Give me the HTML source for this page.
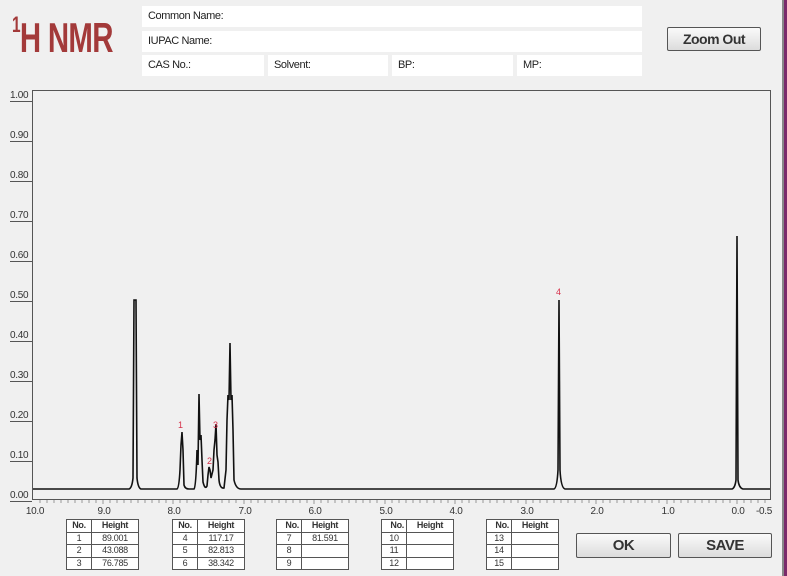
<!DOCTYPE html>
<html><head><meta charset="utf-8"><style>
*{margin:0;padding:0;box-sizing:border-box}
body{width:787px;height:576px;background:#f0f0f0;position:relative;overflow:hidden;font-family:"Liberation Sans",sans-serif}
.f{position:absolute;background:#fff;font-size:11px;color:#222;padding-left:6px;line-height:21px;height:21px;letter-spacing:-0.4px}
.btn{position:absolute;border:1px solid #555;border-radius:2px;background:linear-gradient(#fafafa,#dcdcdc);font-weight:bold;color:#333;text-align:center;font-size:15px;letter-spacing:-0.5px}
.tb{position:absolute;border-collapse:collapse;background:#fff;font-size:9px;color:#333;letter-spacing:-0.3px}
.tb td{border:1px solid #555;height:12.5px;line-height:11px;padding:0 2px}
.tb td:first-child{width:25px;text-align:center}
.tb td:last-child{width:47px;text-align:center}
.yl{position:absolute;left:10px;font-size:10px;color:#333;border-bottom:1px solid #555;width:22px;letter-spacing:-0.3px}
.xl{position:absolute;top:506px;font-size:10px;color:#333;transform:translateX(-50%);letter-spacing:-0.3px}
</style></head><body>
<div style="position:absolute;left:12px;top:14px;color:#a33a3a;font-weight:bold;font-size:42px;letter-spacing:-1px;transform:scaleX(0.7);transform-origin:0 0;white-space:nowrap"><sup style="font-size:22px;position:relative;top:-5px">1</sup>H NMR</div>
<div class="f" style="left:142px;top:6px;width:500px">Common Name:</div>
<div class="f" style="left:142px;top:31px;width:500px">IUPAC Name:</div>
<div class="f" style="left:142px;top:55px;width:122px">CAS No.:</div>
<div class="f" style="left:268px;top:55px;width:120px">Solvent:</div>
<div class="f" style="left:392px;top:55px;width:121px">BP:</div>
<div class="f" style="left:517px;top:55px;width:125px">MP:</div>
<div class="btn" style="left:667px;top:27px;width:94px;height:24px;line-height:22px;font-size:14px">Zoom Out</div>
<div style="position:absolute;left:782px;top:0;width:2px;height:576px;background:#888"></div>
<div style="position:absolute;left:784px;top:0;width:3px;height:576px;background:#7a2a6a"></div>

<svg style="position:absolute;left:0;top:0" width="787" height="576">
<rect x="32.5" y="90.5" width="738" height="409" fill="none" stroke="#555" stroke-width="1"/>
<g stroke="#999">
<path d="M40 500v3M47 500v3M54 500v3M61 500v3M68 500v3M75 500v3M82 500v3M89 500v3M96 500v3M103 500v4M110 500v3M117 500v3M124 500v3M131 500v3M138 500v3M145 500v3M152 500v3M159 500v3M166 500v3M173 500v4M180 500v3M187 500v3M194 500v3M201 500v3M208 500v3M215 500v3M222 500v3M229 500v3M236 500v3M244 500v4M251 500v3M258 500v3M265 500v3M272 500v3M279 500v3M286 500v3M293 500v3M300 500v3M307 500v3M314 500v4M321 500v3M328 500v3M335 500v3M342 500v3M349 500v3M356 500v3M363 500v3M370 500v3M377 500v3M385 500v4M392 500v3M399 500v3M406 500v3M413 500v3M420 500v3M427 500v3M434 500v3M441 500v3M448 500v3M455 500v4M462 500v3M469 500v3M476 500v3M483 500v3M490 500v3M497 500v3M504 500v3M511 500v3M518 500v3M526 500v4M533 500v3M540 500v3M547 500v3M554 500v3M561 500v3M568 500v3M575 500v3M582 500v3M589 500v3M596 500v4M603 500v3M610 500v3M617 500v3M624 500v3M631 500v3M638 500v3M645 500v3M652 500v3M659 500v3M667 500v4M674 500v3M681 500v3M688 500v3M695 500v3M702 500v3M709 500v3M716 500v3M723 500v3M730 500v3M737 500v4M744 500v3M751 500v3M758 500v3M765 500v3"/>
</g>
<path fill="none" stroke="#111" stroke-width="1.6" d="M33 489H129Q132 488 133 478L134 300L136 300L137 478Q138 488 141 489H177Q179 488 180 470L181 445L182 432L183 450L184 485Q185 489 189 489H194Q196 487 197 450L198 465L199 394L200 440L201 435L202 460L203 482Q205 490 207 486L208 475L209 467L210 470L211 478L213 470L214 450L215 440L216 424L217 455L218 462L219 480Q220 489 224 488L226 470L227 420L228 395L229 400L230 343L231 400L232 395L233 430L234 480Q236 489 241 489H554Q557 488 558 470L559 300L560 470Q561 488 565 489H732Q735 488 736 480L737 236L738 480Q739 488 743 489H770"/>
<g fill="#d6304a" font-family="Liberation Sans,sans-serif" font-size="9">
<text x="178" y="428">1</text><text x="207" y="464">2</text><text x="213" y="428">3</text><text x="556" y="295">4</text>
</g>
</svg>
<div class="yl" style="top:90px">1.00</div>
<div class="yl" style="top:130px">0.90</div>
<div class="yl" style="top:170px">0.80</div>
<div class="yl" style="top:210px">0.70</div>
<div class="yl" style="top:250px">0.60</div>
<div class="yl" style="top:290px">0.50</div>
<div class="yl" style="top:330px">0.40</div>
<div class="yl" style="top:370px">0.30</div>
<div class="yl" style="top:410px">0.20</div>
<div class="yl" style="top:450px">0.10</div>
<div class="yl" style="top:490px">0.00</div>
<div class="xl" style="left:35px">10.0</div>
<div class="xl" style="left:104px">9.0</div>
<div class="xl" style="left:174px">8.0</div>
<div class="xl" style="left:245px">7.0</div>
<div class="xl" style="left:315px">6.0</div>
<div class="xl" style="left:386px">5.0</div>
<div class="xl" style="left:456px">4.0</div>
<div class="xl" style="left:527px">3.0</div>
<div class="xl" style="left:597px">2.0</div>
<div class="xl" style="left:668px">1.0</div>
<div class="xl" style="left:738px">0.0</div>
<div class="xl" style="left:764px">-0.5</div>

<table class="tb" style="left:66px;top:519px"><tr><td><b>No.</b></td><td><b>Height</b></td></tr><tr><td>1</td><td>89.001</td></tr><tr><td>2</td><td>43.088</td></tr><tr><td>3</td><td>76.785</td></tr></table>
<table class="tb" style="left:172px;top:519px"><tr><td><b>No.</b></td><td><b>Height</b></td></tr><tr><td>4</td><td>117.17</td></tr><tr><td>5</td><td>82.813</td></tr><tr><td>6</td><td>38.342</td></tr></table>
<table class="tb" style="left:276px;top:519px"><tr><td style="text-align:right"><b>No.</b></td><td><b>Height</b></td></tr><tr><td>7</td><td>81.591</td></tr><tr><td>8</td><td></td></tr><tr><td>9</td><td></td></tr></table>
<table class="tb" style="left:381px;top:519px"><tr><td style="text-align:right"><b>No.</b></td><td><b>Height</b></td></tr><tr><td>10</td><td></td></tr><tr><td>11</td><td></td></tr><tr><td>12</td><td></td></tr></table>
<table class="tb" style="left:486px;top:519px"><tr><td style="text-align:right"><b>No.</b></td><td><b>Height</b></td></tr><tr><td>13</td><td></td></tr><tr><td>14</td><td></td></tr><tr><td>15</td><td></td></tr></table>
<div class="btn" style="left:576px;top:533px;width:95px;height:25px;line-height:23px">OK</div>
<div class="btn" style="left:678px;top:533px;width:94px;height:25px;line-height:23px">SAVE</div>
</body></html>
